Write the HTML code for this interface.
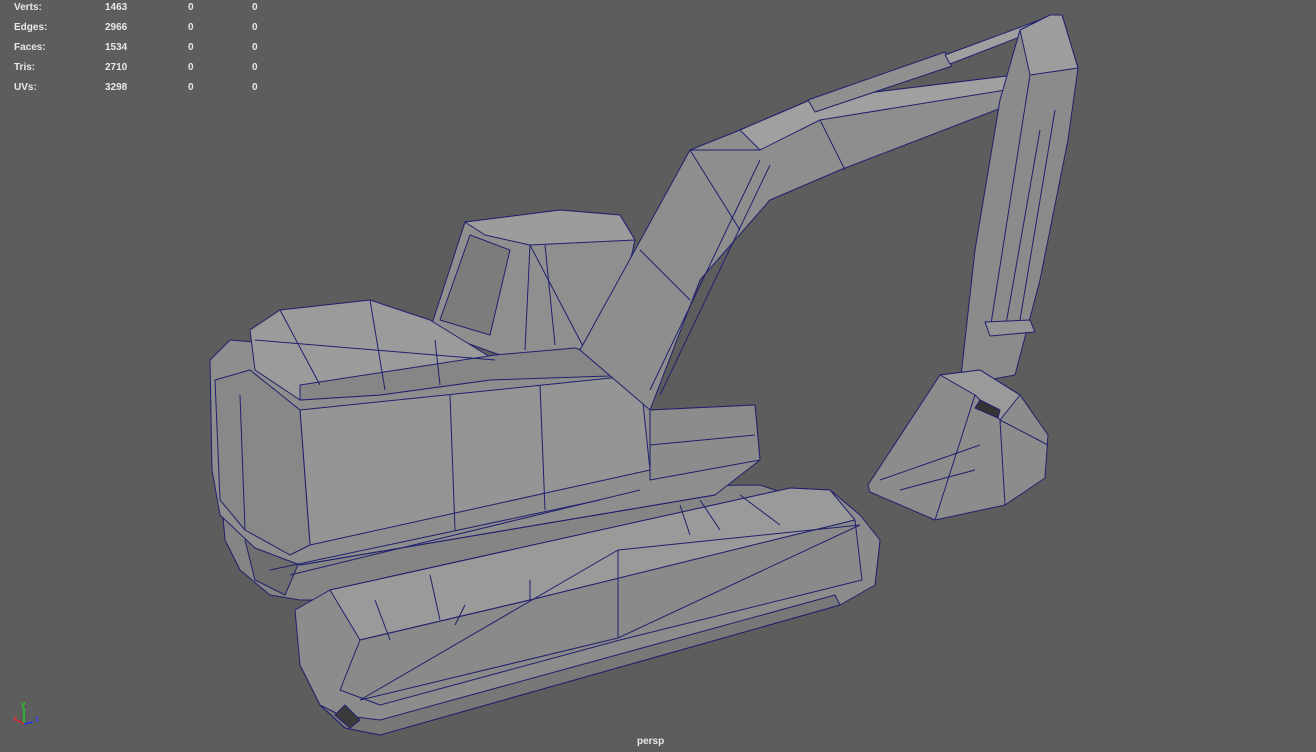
<!DOCTYPE html>
<html><head><style>
html,body{margin:0;padding:0;background:#5d5d5d;width:1316px;height:752px;overflow:hidden;font-family:"Liberation Sans",sans-serif}
.st{position:absolute;color:#e8e8e8;font-size:10px;font-weight:bold}
</style></head><body>
<div class="st" style="left:14px;top:2px">Verts:</div><div class="st" style="left:105px;top:2px">1463</div><div class="st" style="left:188px;top:2px">0</div><div class="st" style="left:252px;top:2px">0</div>
<div class="st" style="left:14px;top:22px">Edges:</div><div class="st" style="left:105px;top:22px">2966</div><div class="st" style="left:188px;top:22px">0</div><div class="st" style="left:252px;top:22px">0</div>
<div class="st" style="left:14px;top:42px">Faces:</div><div class="st" style="left:105px;top:42px">1534</div><div class="st" style="left:188px;top:42px">0</div><div class="st" style="left:252px;top:42px">0</div>
<div class="st" style="left:14px;top:62px">Tris:</div><div class="st" style="left:105px;top:62px">2710</div><div class="st" style="left:188px;top:62px">0</div><div class="st" style="left:252px;top:62px">0</div>
<div class="st" style="left:14px;top:82px">UVs:</div><div class="st" style="left:105px;top:82px">3298</div><div class="st" style="left:188px;top:82px">0</div><div class="st" style="left:252px;top:82px">0</div>
<div class="st" style="left:637px;top:736px">persp</div>
<svg width="1316" height="752" style="position:absolute;left:0;top:0" stroke="#20206e" stroke-width="1" stroke-linejoin="round">
<!-- rear track -->
<polygon points="222,505 240,490 760,485 850,515 880,540 875,585 840,600 300,600 270,595 240,570 225,540" fill="#858585"/>
<polygon points="245,540 260,530 300,560 285,595 255,580" fill="#6e6e6e"/>
<!-- front track -->
<polygon points="295,610 330,590 790,488 830,490 860,515 880,540 875,585 840,605 380,735 345,728 320,705 300,665" fill="#8c8c8c"/>
<polygon points="330,590 790,488 830,490 855,520 530,600 360,640" fill="#9a9a9a"/>
<polygon points="360,640 530,600 855,520 862,580 620,640 380,705 340,690" fill="#8a8a8a"/>
<polygon points="320,705 345,728 380,735 840,605 835,595 380,720 340,715" fill="#787878"/>
<g fill="none"><line x1="618" y1="550" x2="618" y2="638"/><line x1="360" y1="700" x2="618" y2="550"/><line x1="360" y1="700" x2="618" y2="638"/><line x1="618" y1="638" x2="860" y2="525"/><line x1="618" y1="550" x2="860" y2="525"/><line x1="465" y1="605" x2="455" y2="625"/><line x1="700" y1="500" x2="720" y2="530"/><line x1="530" y1="580" x2="530" y2="600"/><line x1="375" y1="600" x2="390" y2="640"/><line x1="430" y1="575" x2="440" y2="620"/><line x1="680" y1="505" x2="690" y2="535"/><line x1="740" y1="495" x2="780" y2="525"/></g>
<polygon points="335,715 345,705 360,720 350,728" fill="#3a3a3a"/>
<!-- body -->
<polygon points="210,360 230,340 640,375 650,410 755,405 760,460 715,495 300,565 255,548 220,515 212,470" fill="#8e8e8e"/>
<polygon points="300,410 640,375 650,470 310,545" fill="#959595"/>
<polygon points="215,380 250,370 300,410 310,545 290,555 245,530 220,500" fill="#888"/>
<polygon points="650,410 755,405 760,460 650,480" fill="#8c8c8c"/>
<g fill="none"><line x1="450" y1="395" x2="455" y2="530"/><line x1="540" y1="385" x2="545" y2="510"/><line x1="240" y1="395" x2="245" y2="530"/><line x1="300" y1="565" x2="715" y2="495"/><line x1="290" y1="575" x2="640" y2="490"/><line x1="270" y1="570" x2="600" y2="500"/><line x1="650" y1="445" x2="755" y2="435"/></g>
<!-- cab -->
<polygon points="430,330 465,222 560,210 620,215 635,240 610,350 500,355" fill="#8f8f8f"/>
<polygon points="465,222 560,210 620,215 635,240 530,245 485,235" fill="#9c9c9c"/>
<polygon points="440,320 470,235 510,250 490,335" fill="#7c7c7c"/>
<g fill="none"><line x1="530" y1="245" x2="525" y2="350"/><line x1="545" y1="245" x2="555" y2="345"/><line x1="530" y1="245" x2="585" y2="350"/></g>
<!-- hood -->
<polygon points="250,330 280,310 370,300 430,320 495,360 490,380 380,395 300,400 255,370" fill="#9b9b9b"/>
<polygon points="300,400 380,395 490,380 640,375 630,365 575,348 495,355 300,385" fill="#868686"/>
<g fill="none"><line x1="280" y1="310" x2="320" y2="385"/><line x1="370" y1="300" x2="385" y2="390"/><line x1="255" y1="340" x2="495" y2="360"/><line x1="435" y1="340" x2="440" y2="385"/></g>
<!-- boom -->
<polygon points="580,350 690,150 740,130 810,100 1015,75 1022,100 840,170 770,200 700,280 650,410" fill="#8e8e8e"/>
<polygon points="740,130 810,100 1015,75 1018,88 820,120 760,150" fill="#a0a0a0"/>
<g fill="none"><line x1="690" y1="150" x2="760" y2="150"/><line x1="820" y1="120" x2="845" y2="170"/><line x1="690" y1="150" x2="740" y2="230"/><line x1="640" y1="250" x2="690" y2="300"/><line x1="760" y1="160" x2="650" y2="390"/><line x1="770" y1="165" x2="660" y2="395"/></g>
<!-- cylinder top -->
<polygon points="808,100 945,52 952,66 815,112" fill="#909090"/>
<polygon points="945,55 1045,18 1048,26 950,64" fill="#a0a0a0"/>
<!-- stick -->
<polygon points="1020,30 1050,15 1062,15 1078,68 1068,140 1040,280 1015,375 960,385 975,250 1000,100" fill="#8b8b8b"/>
<polygon points="1020,30 1050,15 1062,15 1078,68 1030,75" fill="#9d9d9d"/>
<g fill="none"><line x1="1030" y1="75" x2="990" y2="330"/><line x1="1055" y1="110" x2="1020" y2="320"/><line x1="1040" y1="130" x2="1005" y2="330"/></g>
<polygon points="985,322 1030,320 1035,332 990,336" fill="#959595"/>
<!-- bucket -->
<polygon points="868,485 940,375 980,370 1020,395 1048,435 1045,478 1005,505 935,520 870,492" fill="#8c8c8c"/>
<polygon points="940,375 980,370 1020,395 1000,420 975,395" fill="#9a9a9a"/>
<polygon points="980,400 1000,410 998,418 975,408" fill="#333"/>
<g fill="none"><line x1="975" y1="395" x2="935" y2="520"/><line x1="1000" y1="420" x2="1005" y2="505"/><line x1="880" y1="480" x2="980" y2="445"/><line x1="900" y1="490" x2="975" y2="470"/><line x1="1000" y1="420" x2="1048" y2="445"/></g>
<!-- axis -->
<g stroke-width="1.5"><line x1="24" y1="724" x2="24" y2="708" stroke="#2c2"/><line x1="24" y1="724" x2="33" y2="722" stroke="#23e"/><line x1="24" y1="724" x2="17" y2="720" stroke="#d22"/></g>
</svg>
<div class="st" style="left:21px;top:700px;color:#2c2;font-size:8px">y</div>
<div class="st" style="left:13px;top:714px;color:#d33;font-size:8px">x</div>
<div class="st" style="left:35px;top:714px;color:#34e;font-size:8px">z</div>
</body></html>
